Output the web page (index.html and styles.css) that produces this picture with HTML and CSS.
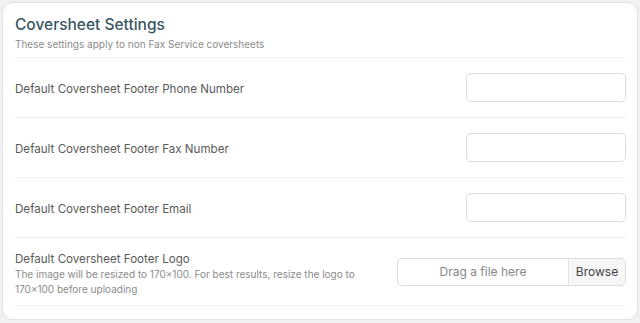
FILE: index.html
```html
<!DOCTYPE html>
<html>
<head>
<meta charset="utf-8">
<link rel="stylesheet" href="styles.css">
</head>
<body>
<div class="card">
  <div class="header">
    <h1 class="title">Coversheet Settings</h1>
    <p class="subtitle">These settings apply to non Fax Service coversheets</p>
  </div>
  <div class="row">
    <div class="label">Default Coversheet Footer Phone Number</div>
    <input class="field" type="text">
  </div>
  <div class="row">
    <div class="label">Default Coversheet Footer Fax Number</div>
    <input class="field" type="text">
  </div>
  <div class="row">
    <div class="label">Default Coversheet Footer Email</div>
    <input class="field" type="text">
  </div>
  <div class="row row-logo">
    <div class="text">
      <div class="label">Default Coversheet Footer Logo</div>
      <div class="desc">The image will be resized to 170×100. For best results, resize the logo to 170×100 before uploading</div>
    </div>
    <div class="file">
      <div class="drop">Drag a file here</div>
      <div class="browse">Browse</div>
    </div>
  </div>
</div>
</body>
</html>
```
FILE: styles.css
```css
html, body {
  margin: 0;
  padding: 0;
  background: #f1f1f1;
  font-family: Inter, "Noto Sans", sans-serif;
}
body {
  padding: 2px 2px 0 2px;
}
.card {
  background: #fff;
  border: 1px solid #e3e3e3;
  border-radius: 11px;
  padding: 10px 11px 14px 12px;
  height: 318px;
  box-sizing: border-box;
}
.header {
  border-bottom: 1px solid #efefef;
  padding-bottom: 6px;
}
.title {
  margin: 0;
  font-size: 15.5px;
  line-height: 23px;
  font-weight: 500;
  color: #38565f;
}
.subtitle {
  margin: 1px 0 0 0;
  font-size: 10px;
  line-height: 14px;
  color: #8b8b8b;
}
.row {
  display: flex;
  align-items: center;
  justify-content: space-between;
  height: 60px;
  box-sizing: border-box;
  border-bottom: 1px solid #efefef;
}
.label {
  font-size: 11.6px;
  line-height: 15px;
  color: #5a5a5a;
}
.row > .label {
  margin-top: 4px;
}
.field {
  width: 160px;
  height: 29px;
  box-sizing: border-box;
  border: 1px solid #dcdcdc;
  border-radius: 5px;
  margin: 0;
  padding: 0 8px;
  background: #fff;
}
.row-logo {
  height: 68px;
}
.text {
  max-width: 350px;
  margin-top: 5px;
}
.desc {
  font-size: 10px;
  line-height: 15px;
  color: #8b8b8b;
}
.file {
  display: flex;
  width: 229px;
  height: 28px;
  box-sizing: border-box;
  border: 1px solid #dcdcdc;
  border-radius: 5px;
  overflow: hidden;
  font-size: 12px;
}
.drop {
  flex: 1;
  display: flex;
  align-items: center;
  justify-content: center;
  color: #888;
}
.browse {
  width: 56px;
  display: flex;
  align-items: center;
  justify-content: center;
  background: #f6f6f6;
  border-left: 1px solid #e3e3e3;
  color: #444;
}
```
